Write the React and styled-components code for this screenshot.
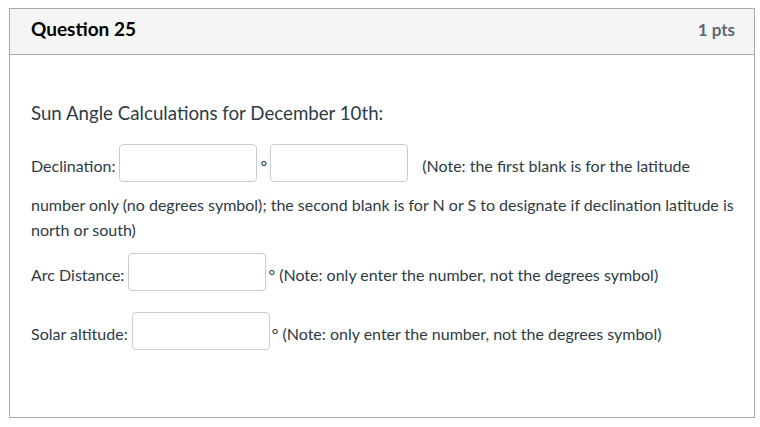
import React from "react";
import styled, { createGlobalStyle } from "styled-components";

const GlobalStyle = createGlobalStyle`
  body {
    margin: 0;
    background: #fff;
    font-family: Lato, "Open Sans", sans-serif;
    color: #2d3b45;
  }
`;

const Page = styled.div`
  padding: 8px 0 0 9px;
`;

const QuestionCard = styled.div`
  width: 746px;
  height: 410px;
  box-sizing: border-box;
  border: 1px solid #aaaaaa;
  display: flex;
  flex-direction: column;
`;

const Header = styled.div`
  display: flex;
  align-items: baseline;
  justify-content: space-between;
  height: 46px;
  padding: 8px 19px 0 21px;
  background: #f5f5f5;
  border-bottom: 1px solid #aaaaaa;
  box-sizing: border-box;
  flex-shrink: 0;
`;

const QuestionName = styled.span`
  font-size: 19px;
  font-weight: 700;
  color: #000;
`;

const Points = styled.span`
  font-size: 17px;
  font-weight: 700;
  color: #5b6770;
`;

const Body = styled.div`
  padding: 45px 17px 0 21px;
  font-size: 16px;
  line-height: 25px;
`;

const Intro = styled.p`
  margin: 0 0 18px;
  font-size: 18.7px;
  line-height: 26px;
`;

const Line = styled.p`
  margin: 0 0 11px;
`;

const Blank = styled.input`
  width: 138px;
  height: 38px;
  box-sizing: border-box;
  margin: 0 ${(p) => p.$after || 0}px 10px ${(p) => p.$before || 0}px;
  padding: 0 6px;
  border: 1px solid #c7cdd1;
  border-radius: 4px;
  background: #fff;
  vertical-align: middle;
  font: inherit;
`;

const Degree = styled.span`
  margin: 0 -1px;
`;

const Note = styled.span`
  margin-left: ${(p) => p.$offset || 0}px;
`;

export default function App() {
  return (
    <>
      <GlobalStyle />
      <Page>
        <QuestionCard>
          <Header>
            <QuestionName>Question 25</QuestionName>
            <Points>1 pts</Points>
          </Header>
          <Body>
            <Intro>Sun Angle Calculations for December 10th:</Intro>
            <Line>
              Declination:<Blank type="text" $before={4} /> <Degree>°</Degree> <Blank type="text" />
              <Note $offset={14}>
                (Note: the first blank is for the latitude number only (no degrees symbol); the second
                blank is for N or S to designate if declination latitude is north or south)
              </Note>
            </Line>
            <Line>
              Arc Distance: <Blank type="text" $after={2} />° (Note: only enter the number, not the
              degrees symbol)
            </Line>
            <Line>
              Solar altitude: <Blank type="text" $after={2} />° (Note: only enter the number, not the
              degrees symbol)
            </Line>
          </Body>
        </QuestionCard>
      </Page>
    </>
  );
}
